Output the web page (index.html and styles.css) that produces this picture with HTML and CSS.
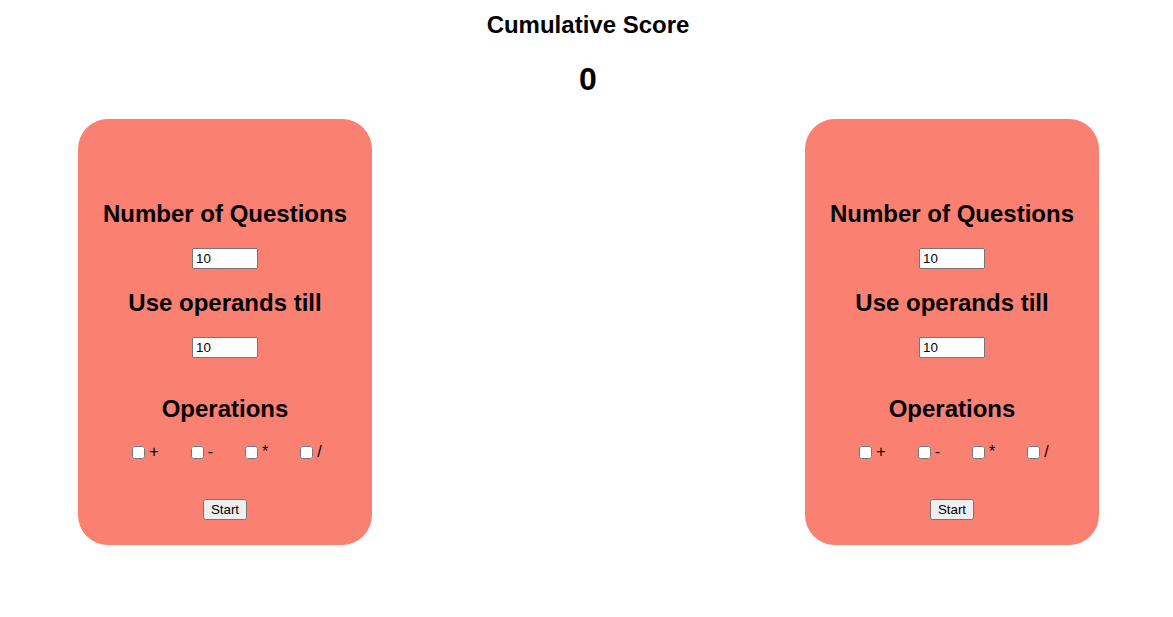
FILE: index.html
```html
<!DOCTYPE html>
<html>
<head>
<meta charset="utf-8">
<link rel="stylesheet" href="styles.css">
</head>
<body>
<h2 class="title">Cumulative Score</h2>
<h1 class="score">0</h1>
<div class="cards">
  <div class="card">
    <h2 class="label">Number of Questions</h2>
    <input class="num" type="text" value="10">
    <h2 class="label">Use operands till</h2>
    <input class="num" type="text" value="10">
    <h2 class="label ops-title">Operations</h2>
    <div class="ops">
      <label class="op"><input type="checkbox">+</label>
      <label class="op"><input type="checkbox">-</label>
      <label class="op"><input type="checkbox">*</label>
      <label class="op"><input type="checkbox">/</label>
    </div>
    <button class="start">Start</button>
  </div>
  <div class="card">
    <h2 class="label">Number of Questions</h2>
    <input class="num" type="text" value="10">
    <h2 class="label">Use operands till</h2>
    <input class="num" type="text" value="10">
    <h2 class="label ops-title">Operations</h2>
    <div class="ops">
      <label class="op"><input type="checkbox">+</label>
      <label class="op"><input type="checkbox">-</label>
      <label class="op"><input type="checkbox">*</label>
      <label class="op"><input type="checkbox">/</label>
    </div>
    <button class="start">Start</button>
  </div>
</div>
</body>
</html>
```
FILE: styles.css
```css
body {
  margin: 0;
  font-family: "Liberation Sans", Arial, sans-serif;
  color: #000;
  background: #fff;
}
.title {
  text-align: center;
  font-size: 24px;
  margin: 11px 0 0;
  padding-left: 3px;
}
.score {
  text-align: center;
  font-size: 32px;
  margin: 22px 0 0;
  padding-left: 3px;
}
.cards {
  display: flex;
  justify-content: space-between;
  padding: 0 74px 0 78px;
  margin-top: 21px;
}
.card {
  width: 294px;
  height: 426px;
  box-sizing: border-box;
  background: #fa8072;
  border-radius: 30px;
  padding-top: 81px;
  display: flex;
  flex-direction: column;
  align-items: center;
}
.label {
  font-size: 24px;
  margin: 0 0 20px;
}
.num {
  width: 66px;
  height: 21px;
  box-sizing: border-box;
  font-family: "Liberation Sans", Arial, sans-serif;
  font-size: 13.33px;
  margin: 0 0 20px;
}
.ops-title {
  margin-top: 17px;
}
.ops {
  display: flex;
  gap: 28px;
  font-size: 16px;
  line-height: 18px;
}
.op input {
  width: 13px;
  height: 13px;
  margin: 3px 4px 3px 4px;
  vertical-align: -2px;
}
.start {
  margin-top: 37px;
  font-family: "Liberation Sans", Arial, sans-serif;
  font-size: 13.33px;
}
```
